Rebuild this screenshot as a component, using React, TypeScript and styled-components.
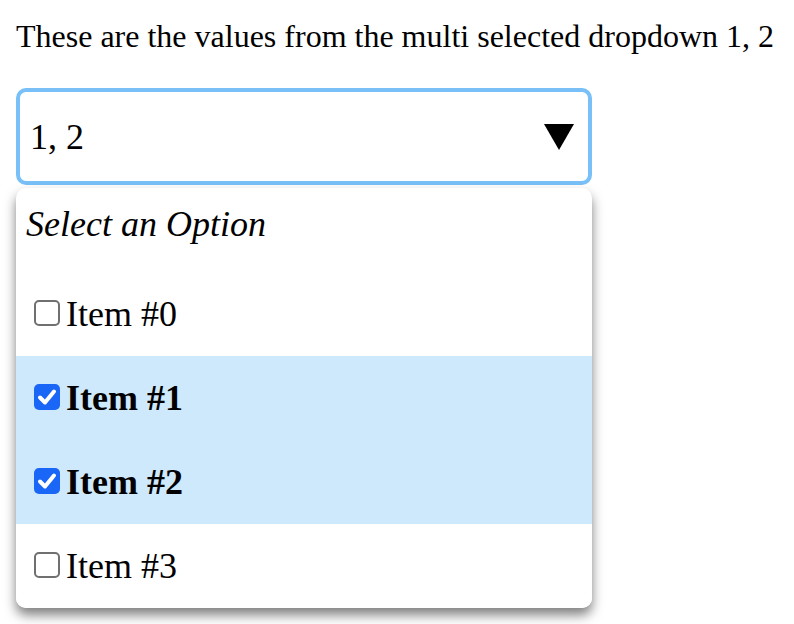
import React from "react";
import styled, { createGlobalStyle } from "styled-components";

const Global = createGlobalStyle`
  html, body { margin: 0; padding: 0; background: #ffffff; }
  body {
    padding: 16px;
    font-family: "Liberation Serif", "Times New Roman", serif;
    color: #000;
  }
`;

const Page = styled.div`
  display: flex;
  flex-direction: column;
  width: 576px;
`;

const Caption = styled.div`
  font-size: 32px;
  line-height: 40px;
  white-space: nowrap;
  margin-bottom: 32px;
`;

const SelectBox = styled.div`
  box-sizing: border-box;
  height: 97px;
  border: 4px solid #78c0f7;
  border-radius: 10px;
  display: flex;
  align-items: center;
  justify-content: space-between;
  padding: 0 14px 0 10px;
  font-size: 36px;
  background: #fff;
`;

const Caret = styled.svg`
  width: 30px;
  height: 26px;
  display: block;
`;

const Menu = styled.div`
  margin-top: 3px;
  border-radius: 10px;
  background: #fff;
  box-shadow: 0 7px 12px rgba(0, 0, 0, 0.5);
  overflow: hidden;
  display: flex;
  flex-direction: column;
`;

const Placeholder = styled.div`
  height: 84px;
  box-sizing: border-box;
  padding: 15px 10px 0;
  font-size: 36px;
  font-style: italic;
`;

const Row = styled.div<{ $selected: boolean }>`
  height: 84px;
  box-sizing: border-box;
  padding: 0 10px;
  display: flex;
  align-items: center;
  font-size: 36px;
  font-weight: ${(p) => (p.$selected ? 700 : 400)};
  background: ${(p) => (p.$selected ? "#cfe9fc" : "#fff")};
`;

const Box = styled.span<{ $checked: boolean }>`
  box-sizing: border-box;
  width: 26px;
  height: 26px;
  margin: 0 6px 2px 8px;
  border-radius: 5px;
  display: flex;
  align-items: center;
  justify-content: center;
  flex: none;
  background: ${(p) => (p.$checked ? "#1a66f6" : "#fff")};
  border: ${(p) => (p.$checked ? "none" : "2px solid #707070")};
`;

const items = [0, 1, 2, 3];
const selected = [1, 2];

export default function App() {
  return (
    <Page>
      <Global />
      <Caption>These are the values from the multi selected dropdown 1, 2</Caption>
      <SelectBox>
        <span>1, 2</span>
        <Caret viewBox="0 0 30 26">
          <polygon points="0,0 30,0 15,26" fill="#000" />
        </Caret>
      </SelectBox>
      <Menu>
        <Placeholder>Select an Option</Placeholder>
        {items.map((i) => {
          const on = selected.includes(i);
          return (
            <Row key={i} $selected={on}>
              <Box $checked={on}>
                {on && (
                  <svg width="20" height="18" viewBox="0 0 20 18">
                    <polyline
                      points="3,9.5 8,14.5 17,3.5"
                      fill="none"
                      stroke="#fff"
                      strokeWidth="4"
                      strokeLinecap="round"
                      strokeLinejoin="round"
                    />
                  </svg>
                )}
              </Box>
              Item #{i}
            </Row>
          );
        })}
      </Menu>
    </Page>
  );
}
